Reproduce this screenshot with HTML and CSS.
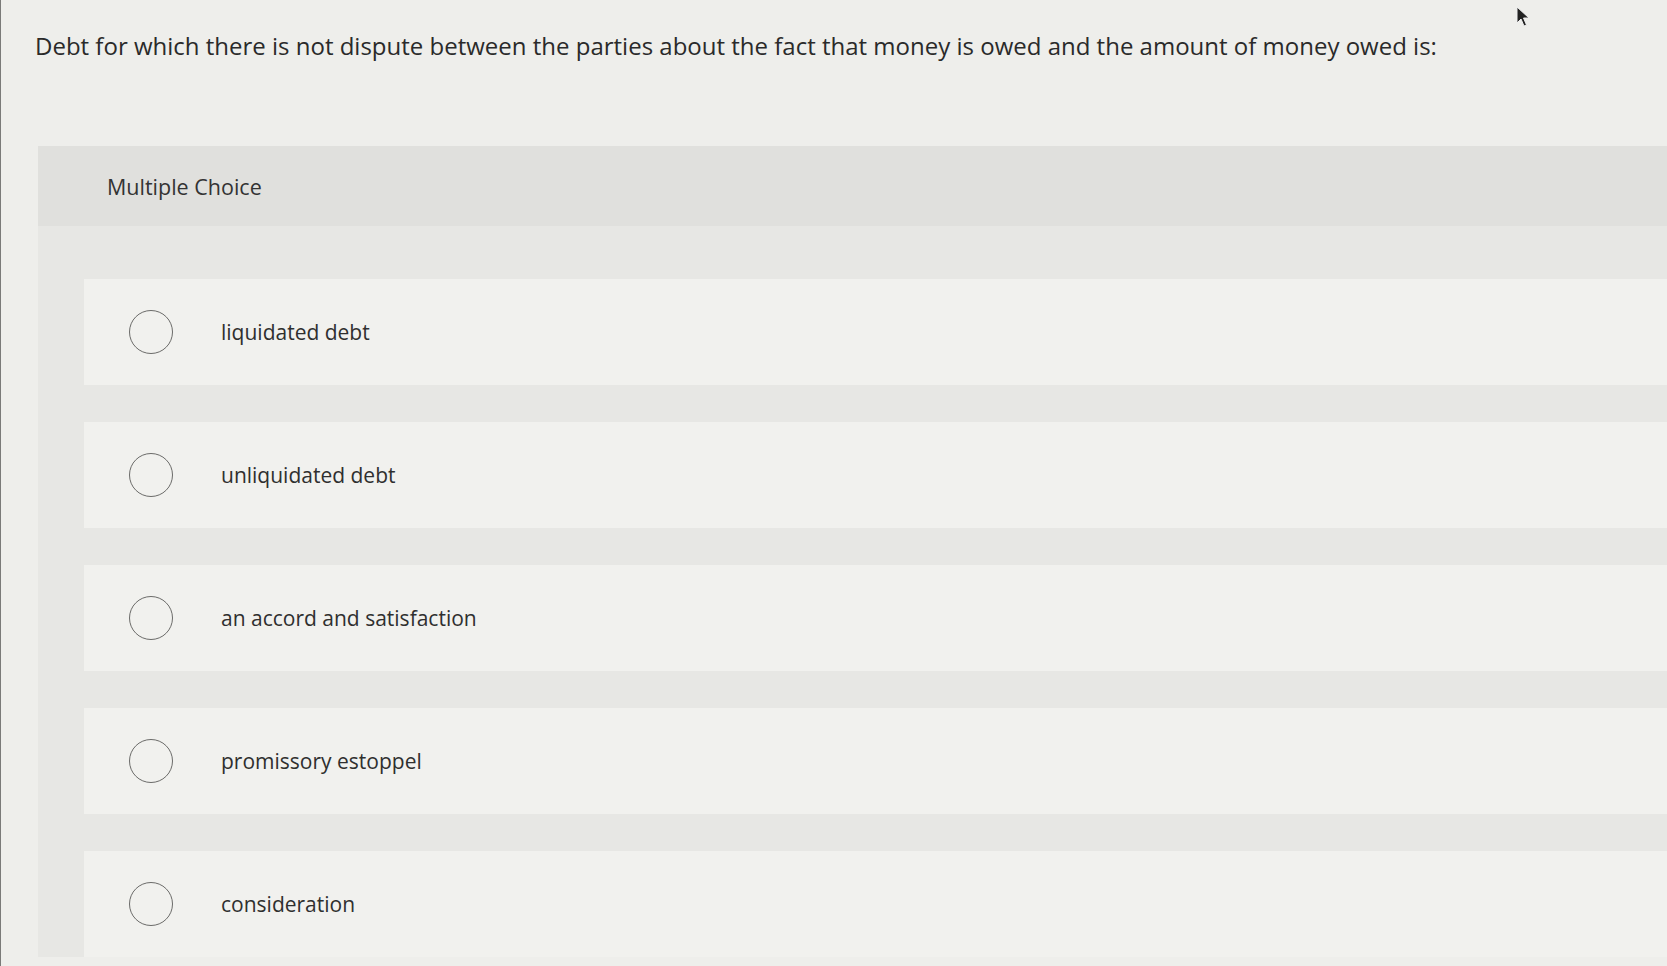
FILE: index.html
```html
<!DOCTYPE html>
<html lang="en">
<head>
<meta charset="utf-8">
<title>Multiple Choice</title>
<link rel="stylesheet" href="styles.css">
</head>
<body>
<div class="page">
  <p class="question">Debt for which there is not dispute between the parties about the fact that money is owed and the amount of money owed is:</p>
  <section class="mc">
    <div class="mc-head">Multiple Choice</div>
    <div class="mc-body">
      <label class="opt"><span class="radio"></span><span class="opt-text">liquidated debt</span></label>
      <label class="opt"><span class="radio"></span><span class="opt-text">unliquidated debt</span></label>
      <label class="opt"><span class="radio"></span><span class="opt-text">an accord and satisfaction</span></label>
      <label class="opt"><span class="radio"></span><span class="opt-text">promissory estoppel</span></label>
      <label class="opt"><span class="radio"></span><span class="opt-text">consideration</span></label>
    </div>
  </section>
  <svg class="cursor" width="14" height="22" viewBox="0 0 14 22"><path d="M1 1 L1 17 L5 13 L8 20 L10.5 19 L7.5 12 L13 12 Z" fill="#222" stroke="#eee" stroke-width="1"/></svg>
</div>
</body>
</html>
```
FILE: styles.css
```css
html, body {
  margin: 0;
  padding: 0;
}
body {
  background: #eeeeeb;
  font-family: "Open Sans", Lato, "Liberation Sans", sans-serif;
  color: #2e2e2e;
  height: 966px;
  overflow: hidden;
}
.page {
  position: relative;
  height: 966px;
  border-left: 1px solid #7a7a78;
  box-sizing: border-box;
}
.question {
  margin: 0;
  padding: 30px 0 0 34px;
  height: 146px;
  box-sizing: border-box;
  font-size: 24px;
  line-height: 31px;
  color: #2a2a2a;
  letter-spacing: 0;
}
.mc {
  margin-left: 37px;
  display: flex;
  flex-direction: column;
}
.mc-head {
  background: #e0e0dd;
  height: 80px;
  display: flex;
  align-items: center;
  padding-left: 69px;
  font-size: 21.5px;
  color: #333;
}
.mc-body {
  background: #e7e7e4;
  padding: 53px 0 0 46px;
  display: flex;
  flex-direction: column;
  gap: 37px;
}
.opt {
  background: #f1f1ee;
  height: 106px;
  display: flex;
  align-items: center;
  padding-left: 45px;
  gap: 48px;
}
.radio {
  width: 44px;
  height: 44px;
  border: 1.5px solid #6b6b69;
  border-radius: 50%;
  box-sizing: border-box;
  flex: none;
}
.opt-text {
  font-size: 21px;
  color: #2f2f2f;
}
.cursor {
  position: absolute;
  left: 1515px;
  top: 6px;
}
```
